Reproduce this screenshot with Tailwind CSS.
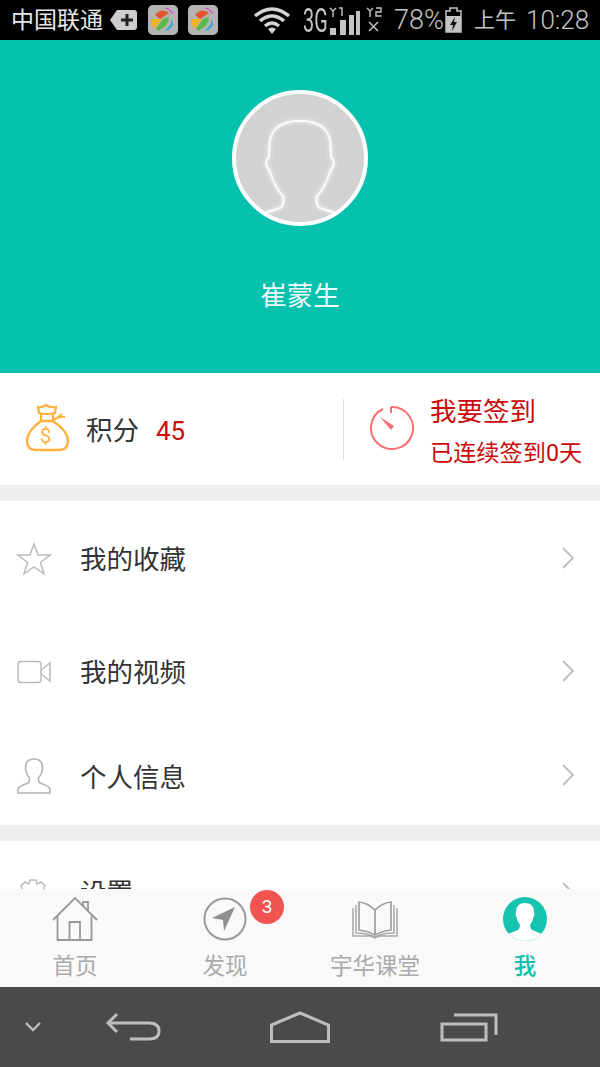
<!DOCTYPE html>
<html lang="zh-CN">

<head>
    <meta charset="UTF-8">
    <meta name="viewport" content="width=device-width, initial-scale=1.0">
    <title>我</title>
    <script src="https://cdn.jsdelivr.net/npm/@tailwindcss/browser@4"></script>
</head>

<body class="bg-white [font-family:Roboto,'Noto_Sans_CJK_SC',sans-serif]">

    <div class="flex flex-col w-[600px] h-[1067px] overflow-hidden">

        <!-- Status bar -->
        <div class="h-[40px] shrink-0 bg-black flex items-center text-[#c4c4c4] pl-[12px]">
            <span class="text-[23px] w-[91px] -ml-px mr-px text-[#e8e8e8] whitespace-nowrap leading-none">中国联通</span>
            <svg class="ml-[7px]" width="27" height="24" viewBox="0 0 27 24">
                <path d="M0 12 L7 2 H24 Q27 2 27 5 V19 Q27 22 24 22 H7 Z" fill="#cdcdcd" />
                <path d="M11 12 H23 M17 6 V18" stroke="#222" stroke-width="3" />
            </svg>
            <svg class="ml-[11px]" width="30" height="30" viewBox="0 0 30 30">
                <rect width="30" height="30" rx="5" fill="#b4b4b4" />
                <path d="M7 10 Q13 2 21 8 L12 14 Z" fill="#e8532b" />
                <path d="M4 14 H14 L6 24 Q3 19 4 14 Z" fill="#f0b418" />
                <path d="M15 14 L21 12 Q21 21 10 26 Q9 25 8 24 Z" fill="#5cb84a" />
                <path d="M23 14 Q25 20 16 26 Q23 25 25 19 Q25 16 23 14 Z" fill="#2aa9e0" />
                <path d="M17 3 Q22 4 25 9" stroke="#d65cc8" stroke-width="1.500" fill="none" />
            </svg>
            <svg class="ml-[10px]" width="30" height="30" viewBox="0 0 30 30">
                <rect width="30" height="30" rx="5" fill="#b4b4b4" />
                <path d="M7 10 Q13 2 21 8 L12 14 Z" fill="#e8532b" />
                <path d="M4 14 H14 L6 24 Q3 19 4 14 Z" fill="#f0b418" />
                <path d="M15 14 L21 12 Q21 21 10 26 Q9 25 8 24 Z" fill="#5cb84a" />
                <path d="M23 14 Q25 20 16 26 Q23 25 25 19 Q25 16 23 14 Z" fill="#2aa9e0" />
                <path d="M17 3 Q22 4 25 9" stroke="#d65cc8" stroke-width="1.500" fill="none" />
            </svg>
            <svg class="ml-[36px]" width="36" height="30" viewBox="0 0 36 30">
                <path d="M1 11 Q18 -3 35 11 M6 16 Q18 6 30 16 M11 21 Q18 15 25 21" stroke="#d4d4d4" stroke-width="3.4" fill="none" />
                <path d="M14 24 Q18 21 22 24 L18 29 Z" fill="#d4d4d4" />
            </svg>
            <span class="ml-[13px] w-[26px] text-[33px] leading-none scale-x-[.6] origin-left whitespace-nowrap">3G</span>
            <svg width="31" height="30" viewBox="0 0 31 30">
                <path d="M1 3 L4 6 L7 3 M4 6 V12 M10 3 L13 3 V11" stroke="#c4c4c4" stroke-width="1.400" fill="none" />
                <path d="M1 22 H7 V29 H1 Z M11 14 H17 V29 H11 Z M20 9 H25 V29 H20 Z M27 5 H31 V29 H27 Z" fill="#c4c4c4" transform="translate(0 1)" />
            </svg>
            <svg class="ml-[6px]" width="17" height="30" viewBox="0 0 17 30">
                <path d="M1 3 L4 6 L7 3 M4 6 V12 M10 3 H15 V7 H10 V11 H15.500" stroke="#c4c4c4" stroke-width="1.400" fill="none" />
                <path d="M3 17 L12 26 M12 17 L3 26" stroke="#c4c4c4" stroke-width="1.500" />
            </svg>
            <span class="ml-[11px] w-[50px] text-[27px] leading-none font-light whitespace-nowrap">78%</span>
            <svg class="ml-[1px]" width="17" height="26" viewBox="0 0 17 26">
                <path d="M5 1 H12 V4 H16 V25 H1 V4 H5 Z" fill="none" stroke="#c4c4c4" stroke-width="1.500" />
                <path d="M1 9 H16 V25 H1 Z" fill="#c4c4c4" />
                <path d="M10 10 L5 18 H8 L7 24 L12 15 H9 Z" fill="#111" />
            </svg>
            <span class="ml-[12px] w-[42px] text-[21px] leading-none whitespace-nowrap">上午</span>
            <span class="ml-[10px] text-[26px] leading-none font-light whitespace-nowrap">10:28</span>
        </div>

        <!-- Profile header -->
        <div class="h-[333px] shrink-0 bg-[#06c1ae] flex flex-col items-center pt-[50px]">
            <div class="w-[136px] h-[136px] rounded-full bg-[#d2d2d2] border-4 border-white overflow-hidden">
                <svg class="-m-[4px] [filter:drop-shadow(0_0_2px_#ffffff)]" width="136" height="136" viewBox="0 0 136 136">
                    <path d="M33 123 L48 118 Q52 116 51.500 107 Q44 98 40 88 Q38 80 34.500 76 Q33 70 37 67 Q37 58 38 50 Q42 31 68 31 Q94 31 98 50 Q99 58 99 67 Q103 70 101.500 76 Q98 80 96 88 Q92 98 84.500 107 Q84 116 88 118 L103 123" fill="none" stroke="#fafafa" stroke-width="2" />
                </svg>
            </div>
            <div class="mt-[52px] text-[26.500px] leading-[36px] text-white/95">崔蒙生</div>
        </div>

        <!-- Points and check-in -->
        <div class="h-[112px] shrink-0 flex items-center bg-white">
            <div class="flex items-center w-[343px] pl-[25px]">
                <svg width="45" height="48" viewBox="0 0 45 48" class="-mt-[2px]">
                    <path d="M16 17 Q2 27 2 37 Q2 46 11 46 H34 Q43 46 43 37 Q43 27 28 17 Z" fill="none" stroke="#ffb03b" stroke-width="2.400" />
                    <path d="M16 17 V9 M28 17 V9 M14 9 L13 3 Q17 4 21 1 Q25 4 31 3 L30 9 Q22 11 14 9 Z" fill="none" stroke="#ffb03b" stroke-width="2.200" />
                    <path d="M28 16 Q34 12 40 13 M33 13 L37 10" fill="none" stroke="#ffb03b" stroke-width="2" />
                    <text x="20.500" y="39" text-anchor="middle" font-size="20" fill="#ffb03b">$</text>
                </svg>
                <span class="ml-[16px] mt-[4px] text-[26.500px] text-[#333]">积分</span>
                <span class="ml-[17px] mt-[4px] text-[26px] text-[#cc0a0a]">45</span>
            </div>
            <div class="w-px h-[61px] bg-[#dcdcdc]"></div>
            <div class="flex items-center pl-[25px]">
                <svg class="-ml-px -mt-[3px]" width="46" height="46" viewBox="0 0 46 46">
                    <path d="M23 2 A21 21 0 1 1 15 4" fill="none" stroke="#fb6c6c" stroke-width="2" />
                    <path d="M23 2 V8" stroke="#fb6c6c" stroke-width="2" />
                    <path d="M12 12 L26 21 L23 25 Z" fill="#fb6c6c" />
                </svg>
                <div class="ml-[16px] mt-[4px] flex flex-col text-[#cc0a0a]">
                    <span class="text-[26.500px] leading-[36px] whitespace-nowrap">我要签到</span>
                    <span class="mt-[8px] text-[23.200px] leading-[30px] whitespace-nowrap">已连续签到0天</span>
                </div>
            </div>
        </div>

        <div class="h-[16px] shrink-0 bg-[#eeeeee]"></div>

        <!-- Menu group 1 -->
        <div class="shrink-0 bg-white">
            <div class="h-[116px] flex items-center pl-[16px] pr-[25px]">
                <div class="w-[64px]">
                    <svg width="36" height="34" viewBox="0 0 36 34">
                        <path d="M18 2 L22 13 H34 L24.500 20.500 L28 32 L18 25 L8 32 L11.500 20.500 L2 13 H14 Z" fill="none" stroke="#bbbbbb" stroke-width="1.500" />
                    </svg>
                </div>
                <span class="pt-[2px] text-[26.500px] text-[#333] flex-1">我的收藏</span>
                <svg class="-mt-[2px]" width="14" height="24" viewBox="0 0 14 24"><path d="M2 2 L12 12 L2 22" fill="none" stroke="#bdbdbd" stroke-width="1.800" /></svg>
            </div>
            <div class="h-[110px] flex items-center pl-[16px] pr-[25px]">
                <div class="w-[64px]">
                    <svg width="36" height="24" viewBox="0 0 36 24">
                        <rect x="2" y="1.500" width="23" height="21" rx="3" fill="none" stroke="#bbbbbb" stroke-width="1.500" />
                        <path d="M25 10 L34 3 V21 L25 14" fill="none" stroke="#bbbbbb" stroke-width="1.500" />
                    </svg>
                </div>
                <span class="pt-[2px] text-[26.500px] text-[#333] flex-1">我的视频</span>
                <svg class="-mt-[2px]" width="14" height="24" viewBox="0 0 14 24"><path d="M2 2 L12 12 L2 22" fill="none" stroke="#bdbdbd" stroke-width="1.800" /></svg>
            </div>
            <div class="h-[98px] flex items-center pl-[16px] pr-[25px]">
                <div class="w-[64px]">
                    <svg width="36" height="38" viewBox="0 0 36 38">
                        <path d="M2 36 V32 Q3 29 12 26 Q14 24 13.500 21 Q10 17 9.500 12 Q9 2 18 2 Q27 2 26.500 12 Q26 17 22.500 21 Q22 24 24 26 Q33 29 34 32 V36 Z" fill="none" stroke="#b4b4b4" stroke-width="1.600" />
                    </svg>
                </div>
                <span class="pt-[4px] text-[26.500px] text-[#333] flex-1">个人信息</span>
                <svg class="-mt-[2px]" width="14" height="24" viewBox="0 0 14 24"><path d="M2 2 L12 12 L2 22" fill="none" stroke="#bdbdbd" stroke-width="1.800" /></svg>
            </div>
        </div>

        <div class="h-[16px] shrink-0 bg-[#eeeeee]"></div>

        <!-- Menu group 2, cut off by the tab bar -->
        <div class="relative flex-1 min-h-0 bg-white">
            <div class="h-[104px] flex items-center pl-[18px] pr-[25px]">
                <div class="w-[62px]">
                    <svg width="30" height="30" viewBox="0 0 30 30">
                        <path d="M12 2 H18 L19 6 L23 4 L27 8 L25 12 L29 13 V18 L25 19 L27 23 L23 27 L19 25 L18 29 H12 L11 25 L7 27 L3 23 L5 19 L1 18 V13 L5 12 L3 8 L7 4 L11 6 Z" fill="none" stroke="#bbbbbb" stroke-width="1.500" />
                    </svg>
                </div>
                <span class="text-[26.500px] text-[#333] flex-1">设置</span>
                <svg width="14" height="24" viewBox="0 0 14 24"><path d="M2 2 L12 12 L2 22" fill="none" stroke="#bdbdbd" stroke-width="1.800" /></svg>
            </div>

            <!-- Tab bar lies over the last row -->
            <div class="absolute left-0 right-0 top-[48px] h-[98px] bg-[#f9f9f9] grid grid-cols-4">
                <div class="flex flex-col items-center pt-[8px]">
                    <svg width="46" height="44" viewBox="0 0 46 44">
                        <path d="M1 23 L23 1 L45 23 M5.500 19 V43 H39.500 V19 M17.500 43 V25 H28 V43 M31 9 V5 H36 V14" fill="none" stroke="#9a9a9a" stroke-width="1.800" />
                    </svg>
                    <span class="mt-[10px] text-[22.500px] leading-[30px] text-[#aaaaaa]">首页</span>
                </div>
                <div class="relative flex flex-col items-center pt-[8px]">
                    <svg width="44" height="44" viewBox="0 0 44 44">
                        <circle cx="22" cy="22" r="20.500" fill="none" stroke="#9a9a9a" stroke-width="2" />
                        <path d="M32 10 L9 21 L20 23 L21 34 Z" fill="#8f8f8f" />
                    </svg>
                    <span class="mt-[10px] text-[22.500px] leading-[30px] text-[#aaaaaa]">发现</span>
                    <span class="absolute left-[100px] top-[1px] w-[34px] h-[34px] rounded-full bg-[#f05350] text-white text-[19px] flex items-center justify-center">3</span>
                </div>
                <div class="flex flex-col items-center pt-[8px]">
                    <svg width="46" height="44" viewBox="0 0 46 44">
                        <path d="M23 13 Q16 6 7 5 V33 Q16 34 23 38 Q30 34 39 33 V5 Q30 6 23 13 V38" fill="none" stroke="#9f9f9f" stroke-width="1.700" />
                        <path d="M4 8 V36 Q15 36 23 40 Q31 36 42 36 V8 M1 11 V39 H17 Q20 39 23 41 Q26 39 29 39 H45 V11" fill="none" stroke="#a8a8a8" stroke-width="1.500" />
                    </svg>
                    <span class="mt-[10px] text-[22.500px] leading-[30px] text-[#aaaaaa] whitespace-nowrap">宇华课堂</span>
                </div>
                <div class="flex flex-col items-center pt-[8px]">
                    <div class="w-[44px] h-[44px] rounded-full overflow-hidden bg-[#14c4ae]">
                        <svg width="44" height="44" viewBox="0 0 44 44">
                            <path d="M5 37 L15 33 Q17 31 17 28 Q14 24 13.500 20 Q12 19 13 15 Q13 6 22 6 Q31 6 31 15 Q32 19 30.500 20 Q30 24 27 28 Q27 31 29 33 L39 37 V44 H5 Z" fill="#ffffff" />
                        </svg>
                    </div>
                    <span class="mt-[10px] text-[22.500px] leading-[30px] text-[#14c0ab] font-medium">我</span>
                </div>
            </div>
        </div>

        <!-- Android nav bar -->
        <div class="relative h-[80px] shrink-0 bg-[#4a4a4c] flex items-center">
            <svg class="ml-[25px]" width="16" height="10" viewBox="0 0 16 10">
                <path d="M1 1 L8 8 L15 1" fill="none" stroke="#bdbdbd" stroke-width="2.400" />
            </svg>
            <svg class="ml-[64px]" width="56" height="30" viewBox="0 0 56 30">
                <path d="M12 2 L3 11 L12 20 M3 11 H44 Q54 11 54 19 Q54 27 44 27 H25" fill="none" stroke="#bdbdbd" stroke-width="3" />
            </svg>
            <svg class="ml-[109px]" width="60" height="32" viewBox="0 0 60 32">
                <path d="M1.500 14 L30 2 L58.500 14 V30.500 H1.500 Z" fill="none" stroke="#bdbdbd" stroke-width="3" />
            </svg>
            <svg class="ml-[110px]" width="58" height="30" viewBox="0 0 58 30">
                <path d="M2 12 H46 V28 H2 Z M14 3 H56 V23" fill="none" stroke="#bdbdbd" stroke-width="3" />
            </svg>
        </div>
    </div>

</body>

</html>
